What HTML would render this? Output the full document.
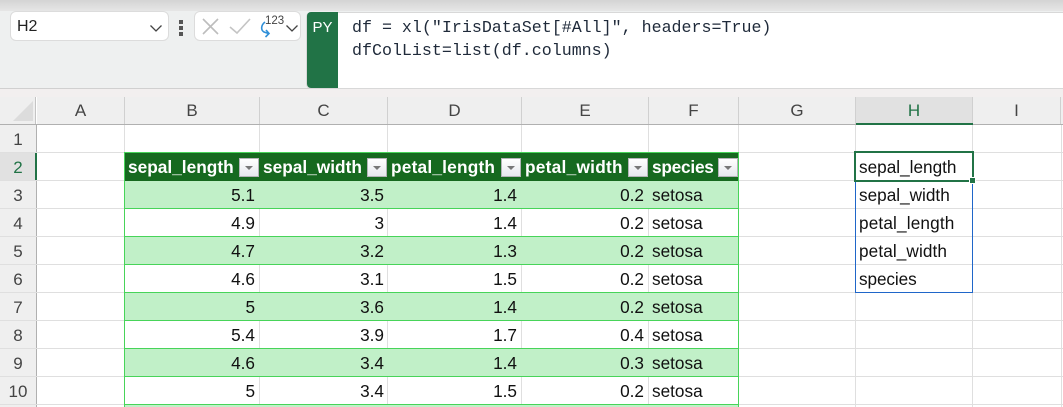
<!DOCTYPE html>
<html><head><meta charset="utf-8"><style>
html,body{margin:0;padding:0;width:1063px;height:407px;overflow:hidden;background:#fff}
body{position:relative;font-family:"Liberation Sans",sans-serif;color:#111}
div{position:absolute;box-sizing:border-box;white-space:nowrap}
.hl{left:36px;width:1027px;height:1px;background:#dfdfdf}
.vl{top:125px;width:1px;height:282px;background:#dfdfdf}
.ch{top:97px;height:27px;background:#efefef;border-right:1px solid #d0d0d0;text-align:center;font-size:17px;line-height:28px;color:#444}
.rh{left:0;width:36px;height:28px;text-align:center;font-size:17px;line-height:29px;color:#444}
.fill{left:125px;width:613px;height:27px;background:#c1f0c8}
.gl{left:124px;width:615px;height:1px;background:#47d459}
.n{text-align:right;font-size:17.2px;line-height:28px;height:28px;color:#111}
.s{left:652px;font-size:17.2px;line-height:28px;height:28px;color:#111}
.h{top:153px;height:27px;font-size:17.3px;line-height:28px;font-weight:bold;color:#fff}
.fb{top:158px;width:20px;height:19px;background:linear-gradient(#fff,#e6e8ee);border:1px solid #b4b4b8}
.fb:after{content:"";position:absolute;left:5px;top:7px;border-left:4px solid transparent;border-right:4px solid transparent;border-top:4px solid #777}
.l{left:859px;font-size:17.2px;line-height:28px;height:28px;color:#111}
.code{left:352px;font-family:"Liberation Mono",monospace;font-size:16.65px;line-height:23px;color:#1f2a3a}
</style></head><body>
<div style="left:0;top:0;width:1063px;height:88px;background:#eef0f0"></div>
<div style="left:0;top:0;width:1063px;height:11px;background:linear-gradient(#d4d4d4,#e6e6e6)"></div>
<div style="left:0;top:88px;width:1063px;height:9px;background:#f2efef"></div>
<div style="left:0;top:88px;width:1063px;height:1px;background:#d0d0d0"></div>
<div style="left:0;top:97px;width:36px;height:27px;background:#efefef;border-right:1px solid #c4c4c4"></div>
<svg style="position:absolute;left:13px;top:101px" width="21" height="21"><path d="M20 0V20H0Z" fill="#dcdcdc"/></svg>

<div style="left:10px;top:11px;width:159px;height:30px;background:#fff;border:1px solid #dcdcdc;border-radius:6px"></div>
<div style="left:17px;top:17px;font-size:16px;line-height:20px;color:#222">H2</div>
<svg style="position:absolute;left:149px;top:24px" width="14" height="9"><path d="M1.500 1.500L7 7L12.500 1.500" fill="none" stroke="#444" stroke-width="1.300"/></svg>
<div style="left:179px;top:20px;width:4px;height:4px;background:#555"></div>
<div style="left:179px;top:26px;width:4px;height:4px;background:#555"></div>
<div style="left:179px;top:32px;width:4px;height:4px;background:#555"></div>
<div style="left:194px;top:11px;width:107px;height:30px;background:#fff;border:1px solid #dcdcdc;border-radius:6px"></div>
<svg style="position:absolute;left:200px;top:16px" width="24" height="20"><path d="M3 3L18 18M18 3L3 18" fill="none" stroke="#bdbdbd" stroke-width="1.600"/></svg>
<svg style="position:absolute;left:228px;top:16px" width="24" height="20"><path d="M2 11L9 17L22 3" fill="none" stroke="#c4c4c4" stroke-width="1.600"/></svg>
<svg style="position:absolute;left:258px;top:20px" width="14" height="18"><path d="M7 2C3 5 2.500 10 6 12L10.500 13.500M8 10L11 13.500L7.500 17" fill="none" stroke="#2f8fd8" stroke-width="1.600"/></svg>
<div style="left:265px;top:15px;font-size:11.500px;line-height:12px;color:#444">123</div>
<svg style="position:absolute;left:285px;top:24px" width="14" height="9"><path d="M1.500 1.500L7 7L12.500 1.500" fill="none" stroke="#444" stroke-width="1.300"/></svg>

<div style="left:306px;top:12px;width:757px;height:77px;background:#fff;border:1px solid #d8d8d8;border-right:0;border-radius:5px 0 0 5px"></div>
<div style="left:307px;top:12px;width:31px;height:76px;background:#217346;border-radius:4px 0 0 4px;color:#fff;font-size:15px;line-height:32px;text-align:center">PY</div>
<div class="code" style="top:16px">df = xl("IrisDataSet[#All]", headers=True)</div>
<div class="code" style="top:39px">dfColList=list(df.columns)</div>

<div class="ch" style="left:37px;width:88px">A</div>
<div class="ch" style="left:125px;width:135px">B</div>
<div class="ch" style="left:260px;width:128px">C</div>
<div class="ch" style="left:388px;width:134px">D</div>
<div class="ch" style="left:522px;width:127px">E</div>
<div class="ch" style="left:649px;width:90px">F</div>
<div class="ch" style="left:739px;width:117px">G</div>
<div class="ch" style="left:856px;width:117px;background:#e1e1e1;color:#217346">H</div>
<div class="ch" style="left:973px;width:88px">I</div>
<div class="ch" style="left:1061px;width:2px;border:0"></div>
<div style="left:0;top:124px;width:1063px;height:1px;background:#b0b0b0"></div>
<div style="left:856px;top:123px;width:117px;height:2px;background:#217346"></div>

<div style="left:0;top:125px;width:36px;height:282px;background:#efefef"></div>
<div style="left:0;top:152px;width:36px;height:28px;background:#e1e1e1"></div>
<div style="left:36px;top:125px;width:1px;height:282px;background:#b0b0b0"></div>
<div style="left:35px;top:152px;width:2px;height:29px;background:#217346"></div>
<div class="rh" style="top:125px">1</div>
<div class="rh" style="top:153px;color:#217346">2</div>
<div class="rh" style="top:181px">3</div>
<div class="rh" style="top:209px">4</div>
<div class="rh" style="top:237px">5</div>
<div class="rh" style="top:265px">6</div>
<div class="rh" style="top:293px">7</div>
<div class="rh" style="top:321px">8</div>
<div class="rh" style="top:349px">9</div>
<div class="rh" style="top:377px">10</div>

<div class="hl" style="top:152px"></div><div class="hl" style="top:180px"></div><div class="hl" style="top:208px"></div><div class="hl" style="top:236px"></div><div class="hl" style="top:264px"></div><div class="hl" style="top:292px"></div><div class="hl" style="top:320px"></div><div class="hl" style="top:348px"></div><div class="hl" style="top:376px"></div><div class="hl" style="top:404px"></div>
<div style="left:0;top:152px;width:36px;height:1px;background:#dfdfdf"></div>
<div style="left:0;top:180px;width:36px;height:1px;background:#dfdfdf"></div>
<div style="left:0;top:208px;width:36px;height:1px;background:#dfdfdf"></div>
<div style="left:0;top:236px;width:36px;height:1px;background:#dfdfdf"></div>
<div style="left:0;top:264px;width:36px;height:1px;background:#dfdfdf"></div>
<div style="left:0;top:292px;width:36px;height:1px;background:#dfdfdf"></div>
<div style="left:0;top:320px;width:36px;height:1px;background:#dfdfdf"></div>
<div style="left:0;top:348px;width:36px;height:1px;background:#dfdfdf"></div>
<div style="left:0;top:376px;width:36px;height:1px;background:#dfdfdf"></div>
<div style="left:0;top:404px;width:36px;height:1px;background:#dfdfdf"></div>

<div class="vl" style="left:124px"></div><div class="vl" style="left:259px"></div><div class="vl" style="left:387px"></div><div class="vl" style="left:521px"></div><div class="vl" style="left:648px"></div><div class="vl" style="left:738px"></div><div class="vl" style="left:855px"></div><div class="vl" style="left:972px"></div><div class="vl" style="left:1061px"></div>

<div style="left:124px;top:152px;width:615px;height:29px;background:#16691f;border-top:1px solid #47d459"></div>
<div style="left:124px;top:152px;width:1px;height:255px;background:#47d459"></div>
<div style="left:738px;top:152px;width:1px;height:255px;background:#47d459"></div>

<div class="fill" style="top:181px"></div><div class="fill" style="top:237px"></div><div class="fill" style="top:293px"></div><div class="fill" style="top:349px"></div><div class="fill" style="top:405px;height:2px"></div>
<div class="gl" style="top:208px"></div><div class="gl" style="top:236px"></div><div class="gl" style="top:264px"></div><div class="gl" style="top:292px"></div><div class="gl" style="top:320px"></div><div class="gl" style="top:348px"></div><div class="gl" style="top:376px"></div><div class="gl" style="top:404px"></div>

<div class="h" style="left:128px">sepal_length</div><div class="fb" style="left:239px"></div>
<div class="h" style="left:263px">sepal_width</div><div class="fb" style="left:367px"></div>
<div class="h" style="left:391px;letter-spacing:.2px">petal_length</div><div class="fb" style="left:501px"></div>
<div class="h" style="left:525px;letter-spacing:.25px">petal_width</div><div class="fb" style="left:628px"></div>
<div class="h" style="left:652px;letter-spacing:-.25px">species</div><div class="fb" style="left:718px"></div>

<div class="n" style="left:125px;width:130px;top:181px">5.1</div><div class="n" style="left:260px;width:124px;top:181px">3.5</div><div class="n" style="left:388px;width:129px;top:181px">1.4</div><div class="n" style="left:522px;width:122px;top:181px">0.2</div><div class="s" style="top:181px">setosa</div>
<div class="n" style="left:125px;width:130px;top:209px">4.9</div><div class="n" style="left:260px;width:124px;top:209px">3</div><div class="n" style="left:388px;width:129px;top:209px">1.4</div><div class="n" style="left:522px;width:122px;top:209px">0.2</div><div class="s" style="top:209px">setosa</div>
<div class="n" style="left:125px;width:130px;top:237px">4.7</div><div class="n" style="left:260px;width:124px;top:237px">3.2</div><div class="n" style="left:388px;width:129px;top:237px">1.3</div><div class="n" style="left:522px;width:122px;top:237px">0.2</div><div class="s" style="top:237px">setosa</div>
<div class="n" style="left:125px;width:130px;top:265px">4.6</div><div class="n" style="left:260px;width:124px;top:265px">3.1</div><div class="n" style="left:388px;width:129px;top:265px">1.5</div><div class="n" style="left:522px;width:122px;top:265px">0.2</div><div class="s" style="top:265px">setosa</div>
<div class="n" style="left:125px;width:130px;top:293px">5</div><div class="n" style="left:260px;width:124px;top:293px">3.6</div><div class="n" style="left:388px;width:129px;top:293px">1.4</div><div class="n" style="left:522px;width:122px;top:293px">0.2</div><div class="s" style="top:293px">setosa</div>
<div class="n" style="left:125px;width:130px;top:321px">5.4</div><div class="n" style="left:260px;width:124px;top:321px">3.9</div><div class="n" style="left:388px;width:129px;top:321px">1.7</div><div class="n" style="left:522px;width:122px;top:321px">0.4</div><div class="s" style="top:321px">setosa</div>
<div class="n" style="left:125px;width:130px;top:349px">4.6</div><div class="n" style="left:260px;width:124px;top:349px">3.4</div><div class="n" style="left:388px;width:129px;top:349px">1.4</div><div class="n" style="left:522px;width:122px;top:349px">0.3</div><div class="s" style="top:349px">setosa</div>
<div class="n" style="left:125px;width:130px;top:377px">5</div><div class="n" style="left:260px;width:124px;top:377px">3.4</div><div class="n" style="left:388px;width:129px;top:377px">1.5</div><div class="n" style="left:522px;width:122px;top:377px">0.2</div><div class="s" style="top:377px">setosa</div>

<div style="left:855px;top:180px;width:118px;height:113px;border:1px solid #1f66c9;background:transparent"></div>
<div style="left:854px;top:151px;width:120px;height:31px;border:2px solid #217346"></div>
<div style="left:969px;top:177px;width:7px;height:7px;background:#217346;border:1px solid #fff"></div>
<div class="l" style="top:153px">sepal_length</div>
<div class="l" style="top:181px">sepal_width</div>
<div class="l" style="top:209px;letter-spacing:.15px">petal_length</div>
<div class="l" style="top:237px;letter-spacing:.1px">petal_width</div>
<div class="l" style="top:265px;letter-spacing:-.1px">species</div>
</body></html>
